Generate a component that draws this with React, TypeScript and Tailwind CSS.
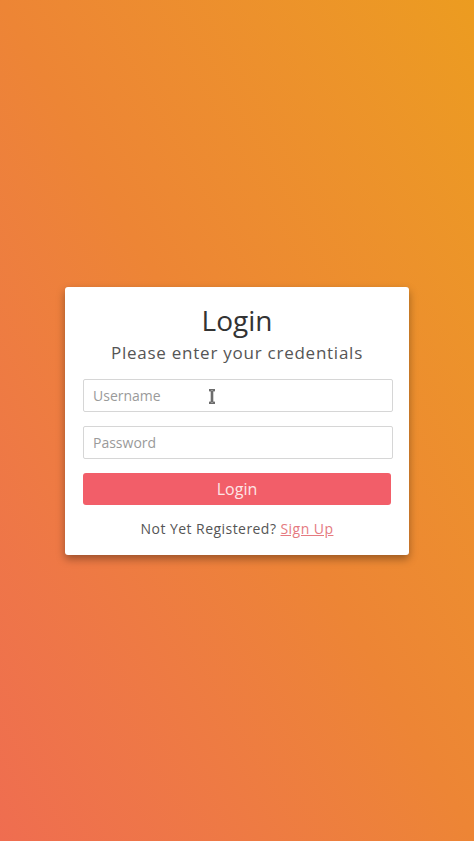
export default function App() {
  return (
    <div className="flex min-h-[841px] w-full items-center justify-center bg-linear-to-tr from-[#ef6d50] via-[#ed8535] to-[#ec9c20] font-['Open_Sans',sans-serif]">
      <div className="w-[344px] rounded-[3px] bg-white px-[18px] pt-[15px] pb-[16px] shadow-[0_4px_8px_rgba(0,0,0,0.35)]">
        <h1 className="text-center text-[28px] leading-[36px] text-[#333]">Login</h1>
        <p className="mt-[3px] text-center text-[17px] leading-[24px] tracking-[0.75px] text-[#555]">
          Please enter your credentials
        </p>

        <div className="relative mt-[14px]">
          <input
            type="text"
            placeholder="Username"
            className="block h-[33px] w-[310px] rounded-[2px] border border-[#d6d6d6] px-[9px] text-[14px] text-[#555] outline-none placeholder:text-[#9a9a9a]"
          />
          {/* mouse cursor */}
          <svg className="absolute left-[125px] top-[10px]" width="8" height="15" viewBox="0 0 8 15">
            <path d="M1 1h6M1 14h6M4 1v13" stroke="#222" strokeWidth="2.4" fill="none" />
            <path d="M1 1h6M1 14h6M4 1v13" stroke="#ddd" strokeWidth="0.8" fill="none" />
          </svg>
        </div>
        <input
          type="password"
          placeholder="Password"
          className="mt-[14px] block h-[33px] w-[310px] rounded-[2px] border border-[#d6d6d6] px-[9px] text-[14px] text-[#555] outline-none placeholder:text-[#9a9a9a]"
        />

        <button className="mt-[14px] block h-[32px] w-[308px] rounded-[3px] bg-[#f25e69] text-[16px] text-[#fde6e6]">
          Login
        </button>

        <p className="mt-[14px] text-center text-[14px] leading-[20px] tracking-[0.45px] text-[#555]">
          Not Yet Registered?{' '}
          <a href="#" className="text-[#e57a80] underline">
            Sign Up
          </a>
        </p>
      </div>
    </div>
  )
}
